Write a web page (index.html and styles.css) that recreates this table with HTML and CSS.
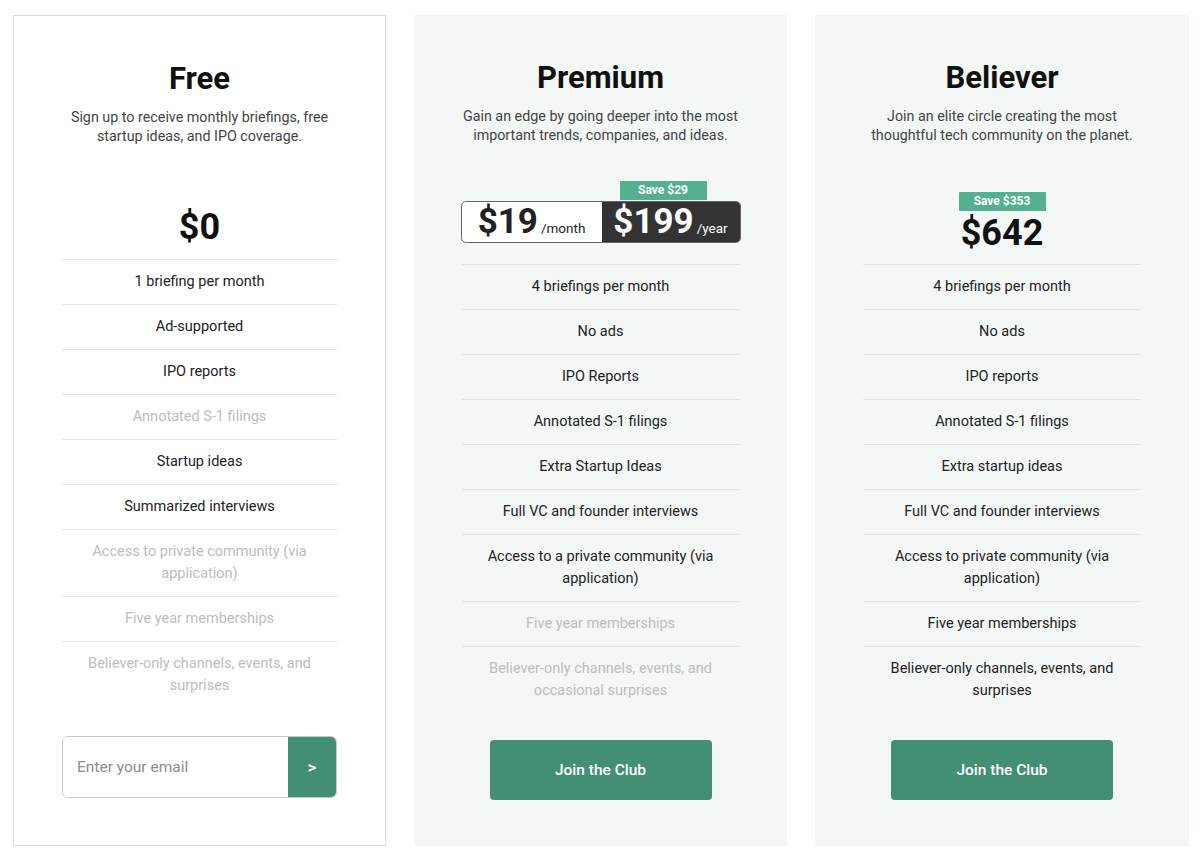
FILE: index.html
```html
<!DOCTYPE html>
<html lang="en">
<head>
    <meta charset="UTF-8">
    <meta name="viewport" content="width=device-width, initial-scale=1.0">
    <title>Membership plans</title>
    <link rel="stylesheet" href="styles.css">
</head>
<body>
    <div class="plans">
        <div class="plan plan-free">
            <h2 class="plan-title">Free</h2>
            <p class="plan-desc">Sign up to receive monthly briefings, free startup ideas, and IPO coverage.</p>
            <div class="plan-price price-free">
                <div class="price-amount">$0</div>
            </div>
            <ul class="features">
                <li>1 briefing per month</li>
                <li>Ad-supported</li>
                <li>IPO reports</li>
                <li class="off">Annotated S-1 filings</li>
                <li>Startup ideas</li>
                <li>Summarized interviews</li>
                <li class="off">Access to private community (via application)</li>
                <li class="off">Five year memberships</li>
                <li class="off">Believer-only channels, events, and surprises</li>
            </ul>
            <form class="signup" onsubmit="return false">
                <input type="email" placeholder="Enter your email">
                <button type="submit">&gt;</button>
            </form>
        </div>

        <div class="plan plan-tinted">
            <h2 class="plan-title">Premium</h2>
            <p class="plan-desc">Gain an edge by going deeper into the most important trends, companies, and ideas.</p>
            <div class="plan-price price-premium">
                <div class="toggle">
                    <span class="save save-toggle">Save $29</span>
                    <div class="toggle-opt">
                        <span class="toggle-num">$19</span><span class="toggle-per">/month</span>
                    </div>
                    <div class="toggle-opt active">
                        <span class="toggle-num">$199</span><span class="toggle-per">/year</span>
                    </div>
                </div>
            </div>
            <ul class="features">
                <li>4 briefings per month</li>
                <li>No ads</li>
                <li>IPO Reports</li>
                <li>Annotated S-1 filings</li>
                <li>Extra Startup Ideas</li>
                <li>Full VC and founder interviews</li>
                <li>Access to a private community (via application)</li>
                <li class="off">Five year memberships</li>
                <li class="off">Believer-only channels, events, and occasional surprises</li>
            </ul>
            <button type="button" class="join">Join the Club</button>
        </div>

        <div class="plan plan-tinted">
            <h2 class="plan-title">Believer</h2>
            <p class="plan-desc">Join an elite circle creating the most thoughtful tech community on the planet.</p>
            <div class="plan-price price-believer">
                <span class="save">Save $353</span>
                <div class="price-amount">$642</div>
            </div>
            <ul class="features">
                <li>4 briefings per month</li>
                <li>No ads</li>
                <li>IPO reports</li>
                <li>Annotated S-1 filings</li>
                <li>Extra startup ideas</li>
                <li>Full VC and founder interviews</li>
                <li>Access to private community (via application)</li>
                <li>Five year memberships</li>
                <li>Believer-only channels, events, and surprises</li>
            </ul>
            <button type="button" class="join">Join the Club</button>
        </div>
    </div>
</body>
</html>
```

FILE: styles.css
```css
body {
    font-family: Roboto, Arial, sans-serif;
    background-color: #fff;
    color: #222;
    margin: 0;
    padding: 0;
}
.plans {
    display: grid;
    grid-template-columns: 373px 373px 374px;
    column-gap: 28px;
    padding: 15px 10px 8px 13px;
}
.plan {
    height: 831px;
    box-sizing: border-box;
    padding: 43px 48px 0;
    display: flex;
    flex-direction: column;
    align-items: stretch;
    text-align: center;
}
.plan-free {
    border: 1px solid #dcdcdc;
    padding-top: 43px;
}
.plan-tinted {
    background-color: #f3f7f6;
}
.plan-title {
    margin: 0;
    font-size: 31px;
    line-height: 40px;
    font-weight: 700;
    color: #111;
}
.plan-desc {
    margin: 9px -6px 0;
    font-size: 14.3px;
    line-height: 19px;
    color: #444;
}
.plan-price {
    display: flex;
    flex-direction: column;
    align-items: center;
    justify-content: flex-end;
    height: 119px;
    box-sizing: border-box;
}
.price-free {
    height: 113px;
    padding-bottom: 10px;
}
.price-amount {
    font-size: 36px;
    line-height: 44px;
    font-weight: 700;
    color: #111;
}
.price-believer {
    padding-bottom: 9px;
}
.save {
    display: inline-block;
    background-color: #55b08f;
    color: #fff;
    font-size: 12px;
    font-weight: 700;
    line-height: 19px;
    width: 87px;
    border-radius: 1px;
}
.price-premium {
    padding-bottom: 21px;
}
.toggle {
    display: grid;
    grid-template-columns: 140px 138px;
    border: 1px solid #666;
    border-radius: 5px;
    background-color: #fff;
    position: relative;
}
.save-toggle {
    position: absolute;
    left: 158px;
    top: -21px;
    border-radius: 1px 1px 0 0;
}
.toggle-opt {
    display: flex;
    align-items: baseline;
    justify-content: center;
    height: 40px;
    color: #222;
}
.toggle-opt.active {
    background-color: #333;
    color: #fff;
    border-radius: 0 4px 4px 0;
}
.toggle-num {
    font-size: 35px;
    line-height: 40px;
    font-weight: 700;
}
.toggle-per {
    font-size: 13.5px;
    margin-left: 3px;
}
.features {
    list-style: none;
    margin: 0;
    padding: 0;
}
.features li {
    border-top: 1px solid #e3e3e3;
    padding: 11px 6px;
    font-size: 14.5px;
    line-height: 22px;
    color: #222;
}
.features li.off {
    color: #bdbdbd;
}
.signup {
    display: flex;
    margin-top: 28px;
    height: 60px;
    border: 1px solid #c8c8c8;
    border-radius: 6px;
    overflow: hidden;
}
.signup input {
    flex: 1;
    min-width: 0;
    border: none;
    padding: 0 14px;
    font-family: inherit;
    font-size: 15.5px;
    color: #222;
    outline: none;
}
.signup input::placeholder {
    color: #8c8c8c;
}
.signup button {
    width: 48px;
    border: none;
    background-color: #438f74;
    color: #fff;
    font-family: inherit;
    font-size: 17px;
    font-weight: 700;
    cursor: pointer;
}
.join {
    align-self: center;
    margin-top: 27px;
    width: 222px;
    height: 60px;
    border: none;
    border-radius: 4px;
    background-color: #438f74;
    color: #fff;
    font-family: inherit;
    font-size: 15.5px;
    font-weight: 500;
    cursor: pointer;
}
```
